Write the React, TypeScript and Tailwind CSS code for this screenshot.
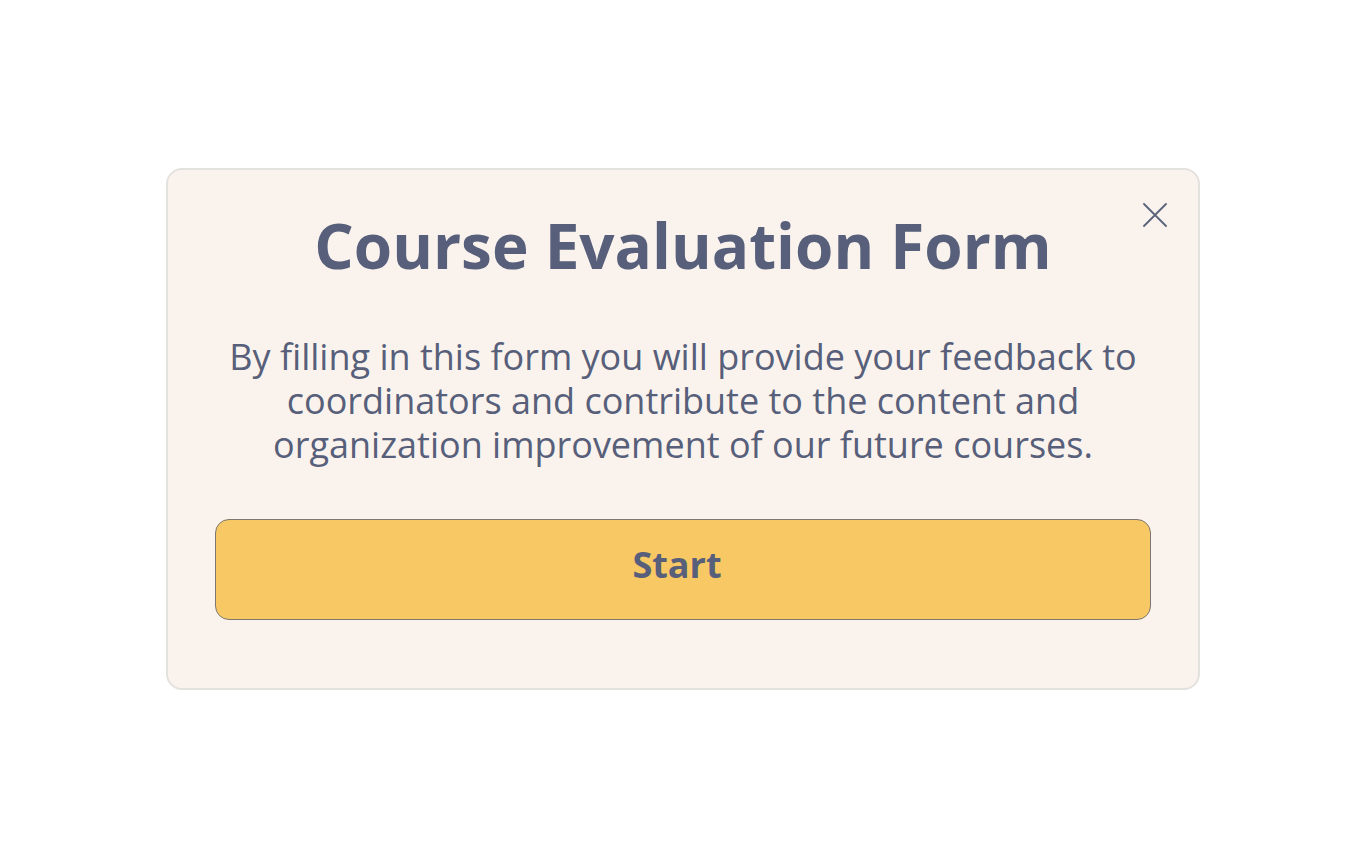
export default function App() {
  return (
    <div
      className="flex h-screen w-full items-center justify-center bg-white pb-[7px]"
      style={{ fontFamily: '"Open Sans", sans-serif' }}
    >
      <div className="relative w-[1034px] rounded-2xl border-2 border-[#e4e2df] bg-[#faf3ed] px-[47px] pt-[35px] pb-[68px]">
        <button className="absolute right-[31px] top-[33px] text-[#5a627a]">
          <svg width="24" height="24" viewBox="0 0 24 24" fill="none" stroke="currentColor" strokeWidth="1.8" strokeLinecap="round">
            <path d="M1 1 23 23M23 1 1 23" />
          </svg>
        </button>

        <h1 className="text-center text-[62px] font-bold leading-[80px] text-[#575f7a]">
          Course Evaluation Form
        </h1>

        <p className="mx-auto mt-[50px] max-w-[940px] text-center text-[36px] leading-[44px] text-[#575f7a]">
          By filling in this form you will provide your feedback to
          coordinators and contribute to the content and organization
          improvement of our future courses.
        </p>

        <button className="mt-[52px] flex h-[101px] w-full items-center justify-center rounded-[14px] border border-[#7d7770] bg-[#f7c863] pr-[12px] pb-[10px] text-[36px] font-bold text-[#575f7a]">
          Start
        </button>
      </div>
    </div>
  );
}
